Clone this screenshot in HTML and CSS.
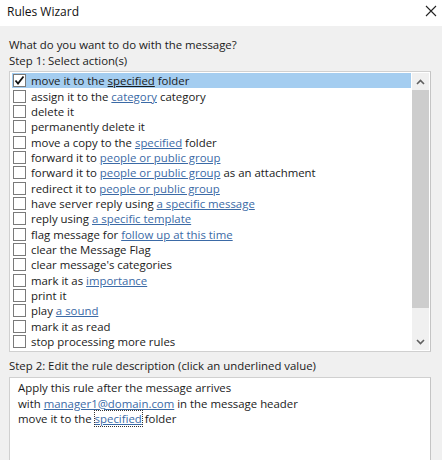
FILE: index.html
```html
<!DOCTYPE html>
<html>
<head>
<meta charset="utf-8">
<link rel="stylesheet" href="styles.css">
</head>
<body>
<div class="window">
  <div class="titlebar">
    <span class="title">Rules Wizard</span>
    <svg class="close" width="12" height="12" viewBox="0 0 12 12"><path d="M1 1 L11 11 M11 1 L1 11" stroke="#222" stroke-width="1.1" fill="none"/></svg>
  </div>
  <div class="content">
    <div class="label">What do you want to do with the message?</div>
    <div class="label">Step 1: Select action(s)</div>
    <div class="listbox">
      <div class="items">
        <div class="row selected"><span class="cb checked"><svg width="11" height="11" viewBox="0 0 11 11"><path d="M1.5 5.5 L4 8.5 L9.5 1.5" stroke="#111" stroke-width="1.8" fill="none"/></svg></span><span>move it to the <u class="sel-link">specified</u> folder</span></div>
        <div class="row"><span class="cb"></span><span>assign it to the <a>category</a> category</span></div>
        <div class="row"><span class="cb"></span><span>delete it</span></div>
        <div class="row"><span class="cb"></span><span>permanently delete it</span></div>
        <div class="row"><span class="cb"></span><span>move a copy to the <a>specified</a> folder</span></div>
        <div class="row"><span class="cb"></span><span>forward it to <a>people or public group</a></span></div>
        <div class="row"><span class="cb"></span><span>forward it to <a>people or public group</a> as an attachment</span></div>
        <div class="row"><span class="cb"></span><span>redirect it to <a>people or public group</a></span></div>
        <div class="row"><span class="cb"></span><span>have server reply using <a>a specific message</a></span></div>
        <div class="row"><span class="cb"></span><span>reply using <a>a specific template</a></span></div>
        <div class="row"><span class="cb"></span><span>flag message for <a>follow up at this time</a></span></div>
        <div class="row"><span class="cb"></span><span>clear the Message Flag</span></div>
        <div class="row"><span class="cb"></span><span>clear message's categories</span></div>
        <div class="row"><span class="cb"></span><span>mark it as <a>importance</a></span></div>
        <div class="row"><span class="cb"></span><span>print it</span></div>
        <div class="row"><span class="cb"></span><span>play <a>a sound</a></span></div>
        <div class="row"><span class="cb"></span><span>mark it as read</span></div>
        <div class="row"><span class="cb"></span><span>stop processing more rules</span></div>
      </div>
      <div class="scrollbar">
        <div class="arrow"><svg width="9" height="6" viewBox="0 0 9 6"><path d="M1 5 L4.5 1.5 L8 5" stroke="#606060" stroke-width="1.6" fill="none"/></svg></div>
        <div class="track"><div class="thumb"></div></div>
        <div class="arrow"><svg width="9" height="6" viewBox="0 0 9 6"><path d="M1 1 L4.5 4.5 L8 1" stroke="#606060" stroke-width="1.6" fill="none"/></svg></div>
      </div>
    </div>
    <div class="label step2">Step 2: Edit the rule description (click an underlined value)</div>
    <div class="descbox">
      <div class="line">Apply this rule after the message arrives</div>
      <div class="line">with <a>manager1@domain.com</a> in the message header</div>
      <div class="line">move it to the <a class="focus">specified</a> folder</div>
    </div>
  </div>
</div>
</body>
</html>
```
FILE: styles.css
```css
html, body {
  margin: 0;
  padding: 0;
}
body {
  width: 442px;
  height: 460px;
  overflow: hidden;
  background: #f0f0f0;
  font-family: "Open Sans", "Noto Sans", sans-serif;
  font-size: 11.4px;
  color: #1a1a1a;
}
.window {
  display: flex;
  flex-direction: column;
  height: 460px;
  overflow: hidden;
}
.titlebar {
  flex: none;
  height: 26px;
  background: #ffffff;
  display: flex;
  align-items: center;
  justify-content: space-between;
  padding: 0 5px 0 7px;
  font-size: 12px;
}
.title {
  margin-top: -4px;
  color: #111;
}
.close {
  margin-top: -4px;
}
.content {
  flex: 1;
  min-height: 0;
  padding: 11px 11px 0 9px;
  display: flex;
  flex-direction: column;
}
.label {
  flex: none;
  line-height: 16px;
  height: 16px;
  white-space: nowrap;
}
.listbox {
  flex: none;
  margin-top: 2px;
  height: 279px;
  border: 1px solid #d0d0d0;
  border-right-color: #c4c4c4;
  background: #ffffff;
  display: flex;
}
.items {
  flex: 1;
  padding: 1px 1px 0 2px;
  display: flex;
  flex-direction: column;
}
.row {
  flex: none;
  height: 15.35px;
  display: flex;
  align-items: center;
  white-space: nowrap;
}
.row.selected {
  background: #a4cdf0;
}
.cb {
  width: 11px;
  height: 11px;
  border: 1px solid #7a7a7a;
  background: #fff;
  margin-left: 1px;
  margin-right: 5px;
  flex: none;
  display: flex;
  align-items: center;
  justify-content: center;
}
a {
  color: #3b6aa6;
  text-decoration: underline;
}
.sel-link {
  text-decoration: underline;
}
.scrollbar {
  width: 17px;
  margin: 1px 1px 1px 0;
  background: #f0f0f0;
  display: flex;
  flex-direction: column;
}
.arrow {
  height: 17px;
  display: flex;
  align-items: center;
  justify-content: center;
  flex: none;
}
.track {
  flex: 1;
  display: flex;
  flex-direction: column;
}
.thumb {
  height: 218px;
  background: #cdcdcd;
}
.step2 {
  margin-top: 6px;
}
.descbox {
  flex: 1;
  margin-top: 3px;
  margin-bottom: -4px;
  background: #ffffff;
  border: 1px solid #d0d0d0;
  border-right-color: #c4c4c4;
  padding: 2px 8px 0 8px;
}
.line {
  height: 15.5px;
  line-height: 15.5px;
  white-space: nowrap;
}
.focus {
  outline: 1px dotted #333;
  outline-offset: 0;
}
```
